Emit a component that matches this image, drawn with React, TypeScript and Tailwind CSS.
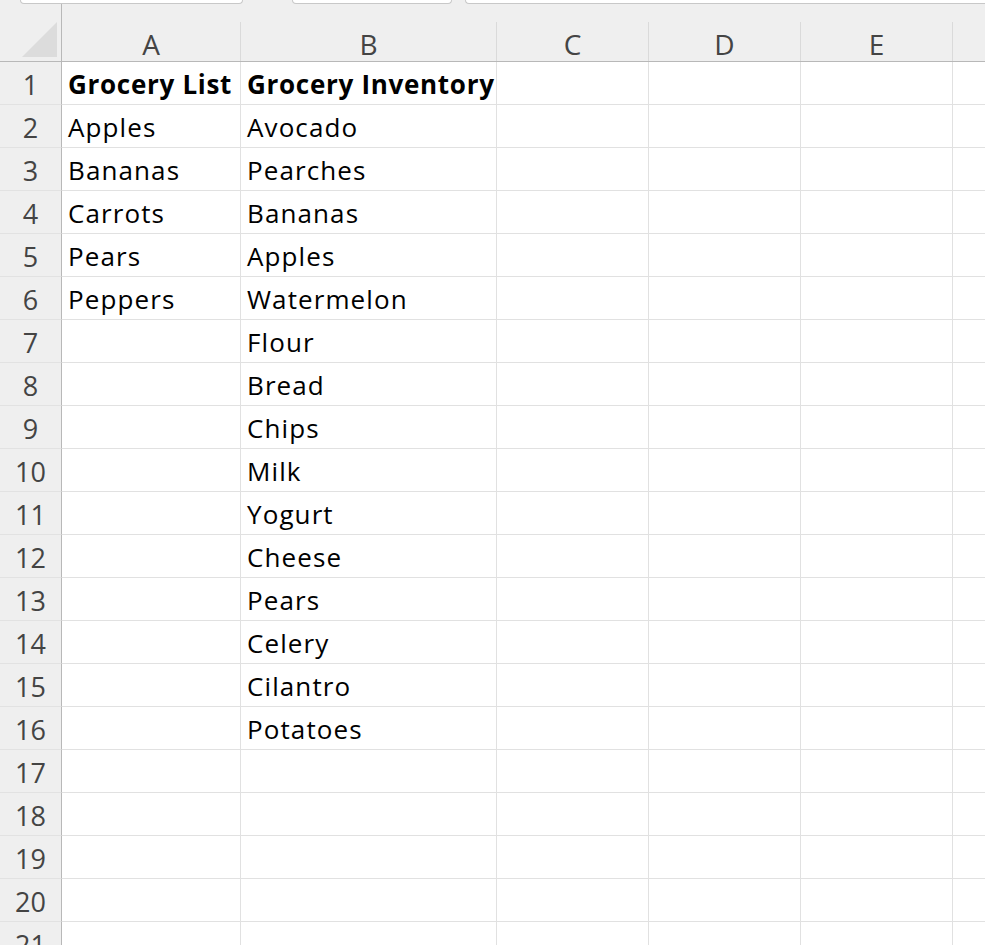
import React from "react";

const colA = ["Grocery List", "Apples", "Bananas", "Carrots", "Pears", "Peppers"];
const colB = [
  "Grocery Inventory",
  "Avocado",
  "Pearches",
  "Bananas",
  "Apples",
  "Watermelon",
  "Flour",
  "Bread",
  "Chips",
  "Milk",
  "Yogurt",
  "Cheese",
  "Pears",
  "Celery",
  "Cilantro",
  "Potatoes",
];

const columns = [
  { label: "A", width: "w-[179px]" },
  { label: "B", width: "w-[256px]" },
  { label: "C", width: "w-[152px]" },
  { label: "D", width: "w-[152px]" },
  { label: "E", width: "w-[152px]" },
];

const font = { fontFamily: '"Open Sans", "Noto Sans", sans-serif' };

function Cell({ width, text, bold }: { width: string; text?: string; bold?: boolean }) {
  return (
    <div
      className={`${width} shrink-0 h-[43px] border-r border-b border-[#e1e1e1] flex items-end pl-[6px] pb-[7px] overflow-visible whitespace-nowrap`}
    >
      {text && (
        <span
          className={`text-[26px] leading-none text-black ${bold ? "font-bold tracking-[0.7px]" : "tracking-[1.1px]"}`}
        >
          {text}
        </span>
      )}
    </div>
  );
}

export default function App() {
  const rows = Array.from({ length: 21 }, (_, i) => i + 1);

  return (
    <div className="w-[985px] h-[945px] overflow-hidden bg-white" style={font}>
      {/* ribbon remnants */}
      <div className="flex h-[4px] bg-[#efefef]">
        <div className="ml-[20px] w-[223px] h-[4px] bg-white border border-t-0 border-[#c8c8c8] rounded-b-[6px]" />
        <div className="ml-[49px] w-[160px] h-[4px] bg-white border border-t-0 border-[#c8c8c8] rounded-b-[6px]" />
        <div className="ml-[13px] flex-1 h-[4px] bg-white border border-t-0 border-r-0 border-[#c8c8c8] rounded-bl-[6px]" />
      </div>

      {/* column headers */}
      <div className="flex h-[58px] bg-[#efefef] border-b border-[#b8b8b8]">
        <div className="w-[62px] shrink-0 border-r border-[#b8b8b8] flex items-end justify-end pr-[3px] pb-[3px]">
          <svg width="36" height="36" viewBox="0 0 36 36">
            <polygon points="0,35 35,0 35,35" fill="#dcdcdc" />
          </svg>
        </div>
        {columns.map((c) => (
          <div key={c.label} className={`${c.width} shrink-0 flex items-end`}>
            <div className="flex-1 h-[39px] border-r border-[#dadada] flex items-end justify-center pb-[3px]">
              <span className="text-[28px] leading-none text-[#444]">{c.label}</span>
            </div>
          </div>
        ))}
        <div className="flex-1" />
      </div>

      {/* grid rows */}
      {rows.map((r) => (
        <div key={r} className="flex">
          <div className="w-[62px] shrink-0 h-[43px] bg-[#efefef] border-r border-b border-r-[#b8b8b8] border-b-[#e2e2e2] flex items-end justify-center pb-[6px]">
            <span className="text-[27px] leading-none text-[#444]">{r}</span>
          </div>
          <Cell width="w-[179px]" text={colA[r - 1]} bold={r === 1} />
          <Cell width="w-[256px]" text={colB[r - 1]} bold={r === 1} />
          <Cell width="w-[152px]" />
          <Cell width="w-[152px]" />
          <Cell width="w-[152px]" />
          <div className="flex-1 h-[43px] border-b border-[#e1e1e1]" />
        </div>
      ))}
    </div>
  );
}
